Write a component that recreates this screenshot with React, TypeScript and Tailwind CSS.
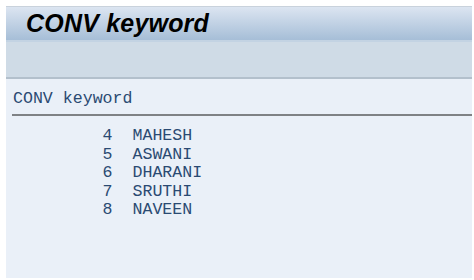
import type { FC } from "react";

const ROWS = [
  { n: 4, name: "MAHESH" },
  { n: 5, name: "ASWANI" },
  { n: 6, name: "DHARANI" },
  { n: 7, name: "SRUTHI" },
  { n: 8, name: "NAVEEN" },
];

const mono = "font-['Liberation_Mono','Courier_New',monospace] text-[16.6px] text-[#2a4a72]";

const App: FC = () => {
  return (
    <div className="w-[474px] h-[280px] bg-white pt-[6px] pl-[6px] pr-[2px] pb-[2px] flex">
      <div className="flex-1 flex flex-col border-t border-[#c9d2dc]">
        {/* title bar */}
        <div className="h-[35px] bg-gradient-to-b from-[#dce5f1] to-[#a6bed7] border-b-2 border-[#c3d3e3] flex items-center pl-[20px]">
          <span className="font-['Liberation_Sans',Arial,sans-serif] font-bold italic text-[25px] leading-none text-black tracking-[0.2px]">
            CONV keyword
          </span>
        </div>

        {/* toolbar */}
        <div className="h-[37px] bg-[#cfdbe6] border-b-2 border-[#b3c0cc]" />

        {/* list output */}
        <div className="flex-1 bg-[#eaf0f8] pt-[10px]">
          <div className={`${mono} leading-[19px] pl-[7px] whitespace-pre`}>CONV keyword</div>
          <div className="mt-[6px] ml-[6px] h-[2px] bg-[#7f8285]" />
          <div className={`${mono} leading-[18.6px] pl-[7px] pt-[11px] whitespace-pre`}>
            {ROWS.map((r) => (
              <div key={r.n}>{`         ${r.n}  ${r.name}`}</div>
            ))}
          </div>
        </div>
      </div>
    </div>
  );
};

export default App;
